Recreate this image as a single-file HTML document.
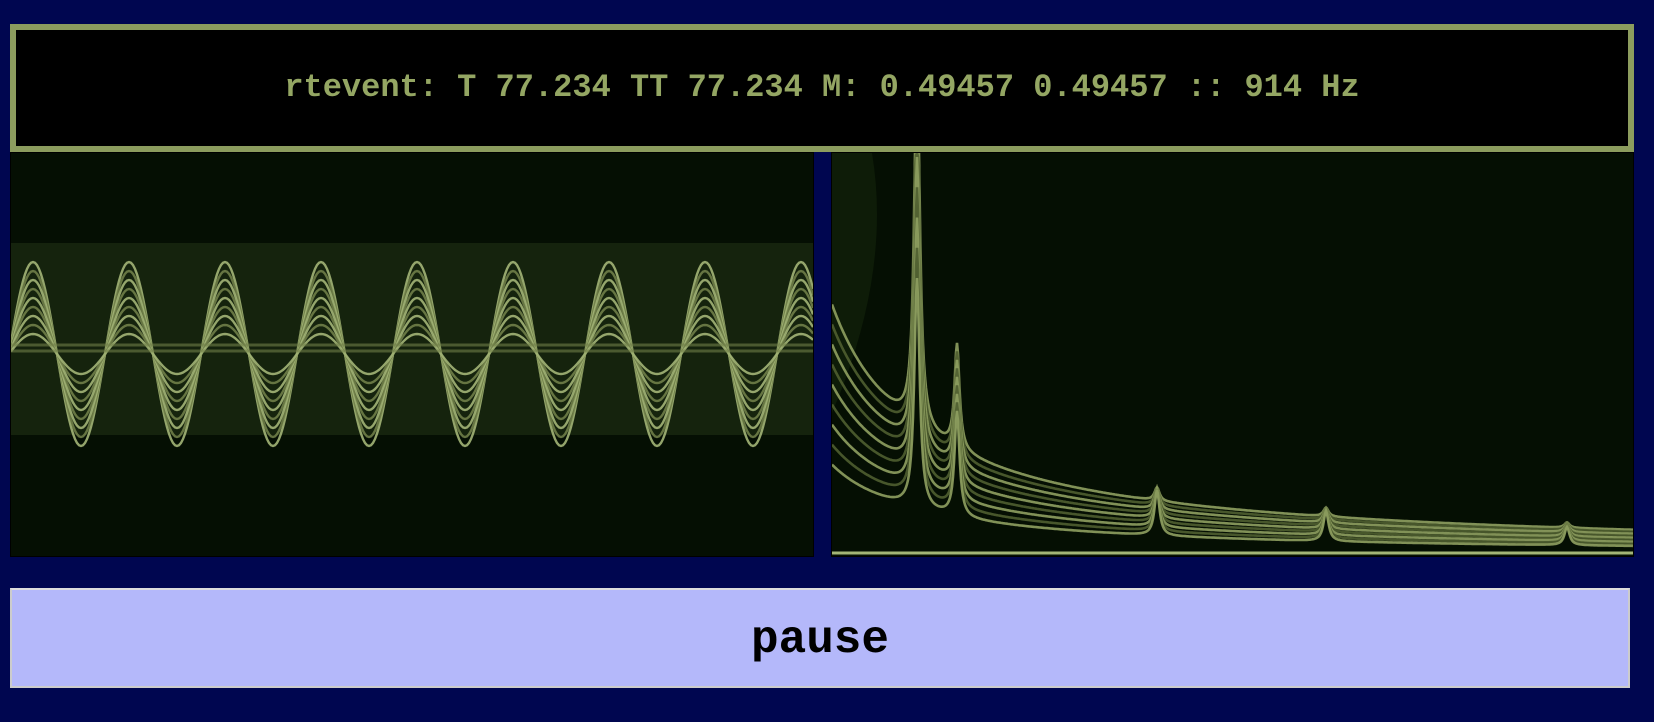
<!DOCTYPE html>
<html><head><meta charset="utf-8"><style>
html,body{margin:0;padding:0;width:1654px;height:722px;background:#000650;overflow:hidden}
#hdr{position:absolute;left:10px;top:24px;width:1612px;height:116px;border:6px solid #8c9c5e;background:#000;color:#94a663;font:bold 32px "Liberation Mono",monospace;text-align:center;line-height:116px}
.cv{position:absolute;top:152px;height:403px;background:#050f03;border:1px solid #000}
#btn{position:absolute;left:10px;top:588px;width:1616px;height:96px;background:#b4b8fa;border:2px solid #ccc;border-top-color:#ddd;font:bold 46px "Liberation Mono",monospace;color:#000;text-align:center;line-height:100px}
</style></head><body>
<div id="hdr">rtevent: T 77.234 TT 77.234 M: 0.49457 0.49457 :: 914 Hz</div>
<svg class="cv" style="left:10px;width:802px" viewBox="0 0 802 403" id="L"></svg>
<svg class="cv" style="left:831px;width:801px" viewBox="0 0 801 403" id="R"></svg>
<div id="btn">pause</div>
<script>
var ns="http://www.w3.org/2000/svg";
function add(s,t,a){var e=document.createElementNS(ns,t);for(var k in a)e.setAttribute(k,a[k]);s.appendChild(e);}
var L=document.getElementById('L');
add(L,'rect',{x:0,y:90,width:802,height:192,fill:'#15230d'});
var c=201,P=96,x0=22;
for(var i=0;i<9;i++){var A=92-i*9,d='';
 for(var x=0;x<=802;x+=2){var y=c-A*Math.cos(2*Math.PI*(x-x0)/P);d+=(x?'L':'M')+x+' '+y.toFixed(1);}
 add(L,'path',{d:d,stroke:i%2?'#6f7e48':'#a3b577',fill:'none','stroke-width':2.4,opacity:0.9});}
add(L,'path',{d:'M0 192H802M0 198H802',stroke:'#6f7e48','stroke-width':3,fill:'none',opacity:.6});
var R=document.getElementById('R');
add(R,'path',{d:'M0 0H40Q60 120 0 260Z',fill:'#0e1c08'});
var pk=[[85,3.2,1],[125,3,0.35],[325,3,0.15],[494,3,0.1],[735,3,0.06]];
for(var i=0;i<9;i++){var a=250-i*20,d='';
 for(var x=0;x<=801;x+=1){var y=402-a/(1+x/90);
  for(var p=0;p<pk.length;p++){var q=pk[p];var w=(x-q[0])/q[1];y-=q[2]*(p==0?(a+140):300)/(1+w*w)*(p>1?(0.3+i*0.09):1);}
  y=Math.max(0,y);d+=(x?'L':'M')+x+' '+y.toFixed(1);}
 add(R,'path',{d:d,stroke:i%2?'#4f5e30':'#8fa060',fill:'none','stroke-width':2.6,opacity:.9});}
add(R,'path',{d:'M0 400H801',stroke:'#a3b577','stroke-width':3});
</script>
</body></html>
